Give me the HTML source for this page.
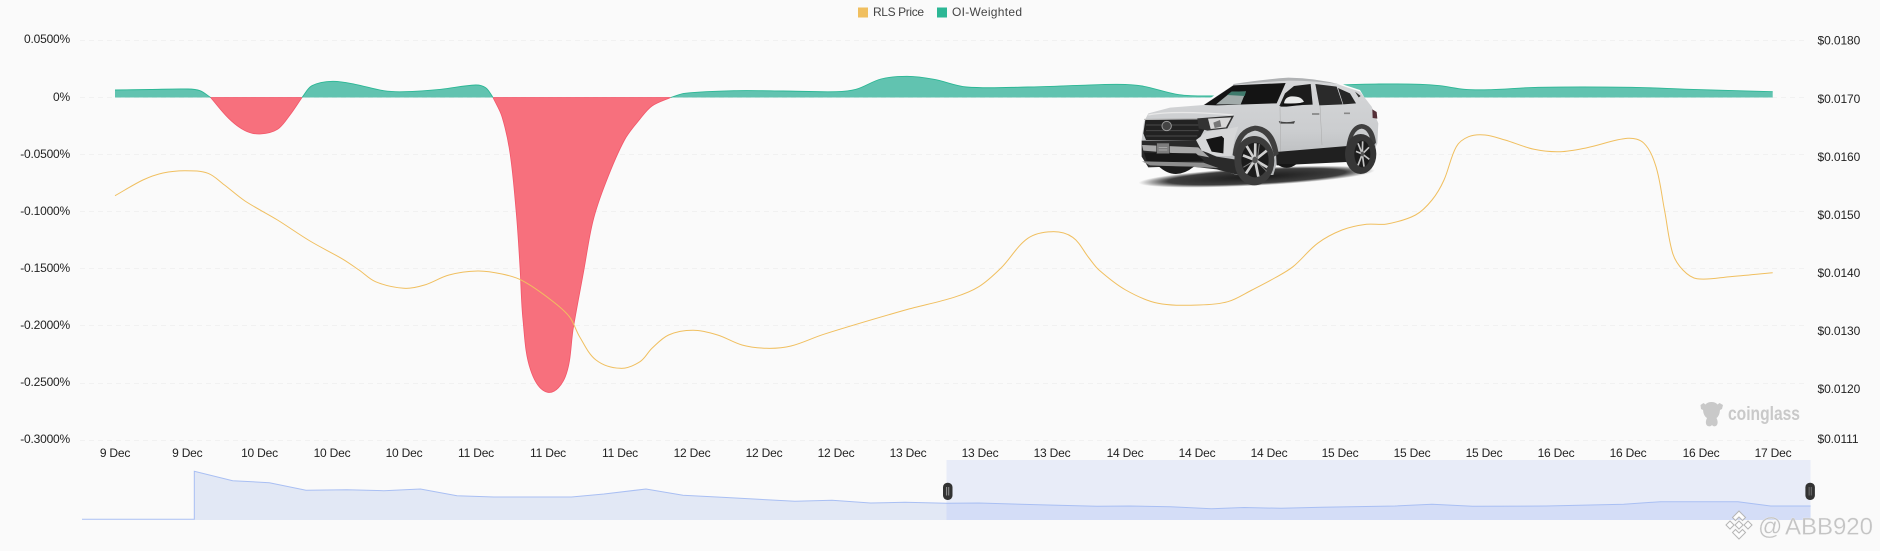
<!DOCTYPE html>
<html>
<head>
<meta charset="utf-8">
<style>
html,body{margin:0;padding:0;background:#fafafa;width:1880px;height:551px;overflow:hidden}
svg{display:block;font-family:"Liberation Sans",sans-serif}
.l{font-size:12px;fill:#222;text-anchor:end;letter-spacing:-.2px}
.r{font-size:12px;fill:#222;letter-spacing:-.1px}
.x{font-size:12px;fill:#222;text-anchor:middle;letter-spacing:-.2px}
.g{stroke:#f1f1f1;stroke-width:1;stroke-dasharray:5 4}
</style>
</head>
<body>
<svg width="1880" height="551" viewBox="0 0 1880 551" xmlns="http://www.w3.org/2000/svg">
<rect width="1880" height="551" fill="#fafafa"/>
<!-- legend -->
<rect x="858" y="7.5" width="10" height="10" fill="#f0bf5f"/>
<text x="873" y="16" font-size="12" fill="#444" textLength="51">RLS Price</text>
<rect x="937" y="7.5" width="10" height="10" fill="#2cb795"/>
<text x="952" y="16" font-size="12" fill="#444" textLength="70">OI-Weighted</text>
<!-- grid -->
<g class="g">
<line x1="80" x2="1807" y1="40.5" y2="40.5"/>
<line x1="80" x2="1807" y1="97.5" y2="97.5"/>
<line x1="80" x2="1807" y1="154.5" y2="154.5"/>
<line x1="80" x2="1807" y1="211.5" y2="211.5"/>
<line x1="80" x2="1807" y1="268.5" y2="268.5"/>
<line x1="80" x2="1807" y1="325.5" y2="325.5"/>
<line x1="80" x2="1807" y1="383.5" y2="383.5"/>
<line x1="80" x2="1807" y1="440.5" y2="440.5"/>
</g>
<!-- left axis -->
<text class="l" x="70" y="43">0.0500%</text>
<text class="l" x="70" y="101">0%</text>
<text class="l" x="70" y="158">-0.0500%</text>
<text class="l" x="70" y="215">-0.1000%</text>
<text class="l" x="70" y="272">-0.1500%</text>
<text class="l" x="70" y="329">-0.2000%</text>
<text class="l" x="70" y="386">-0.2500%</text>
<text class="l" x="70" y="443">-0.3000%</text>
<!-- right axis -->
<text class="r" x="1817.5" y="44.500">$0.0180</text>
<text class="r" x="1817.5" y="103">$0.0170</text>
<text class="r" x="1817.5" y="161">$0.0160</text>
<text class="r" x="1817.5" y="219">$0.0150</text>
<text class="r" x="1817.5" y="277">$0.0140</text>
<text class="r" x="1817.5" y="335">$0.0130</text>
<text class="r" x="1817.5" y="393">$0.0120</text>
<text class="r" x="1817.5" y="443">$0.0111</text>
<!-- x axis -->
<g>
<text class="x" x="115" y="457">9 Dec</text>
<text class="x" x="187.3" y="457">9 Dec</text>
<text class="x" x="259.5" y="457">10 Dec</text>
<text class="x" x="332" y="457">10 Dec</text>
<text class="x" x="404" y="457">10 Dec</text>
<text class="x" x="476" y="457">11 Dec</text>
<text class="x" x="548" y="457">11 Dec</text>
<text class="x" x="620" y="457">11 Dec</text>
<text class="x" x="692" y="457">12 Dec</text>
<text class="x" x="764" y="457">12 Dec</text>
<text class="x" x="836" y="457">12 Dec</text>
<text class="x" x="908" y="457">13 Dec</text>
<text class="x" x="980" y="457">13 Dec</text>
<text class="x" x="1052" y="457">13 Dec</text>
<text class="x" x="1125" y="457">14 Dec</text>
<text class="x" x="1197" y="457">14 Dec</text>
<text class="x" x="1269" y="457">14 Dec</text>
<text class="x" x="1340" y="457">15 Dec</text>
<text class="x" x="1412" y="457">15 Dec</text>
<text class="x" x="1484" y="457">15 Dec</text>
<text class="x" x="1556" y="457">16 Dec</text>
<text class="x" x="1628" y="457">16 Dec</text>
<text class="x" x="1701" y="457">16 Dec</text>
<text class="x" x="1773" y="457">17 Dec</text>
</g>
<!-- OI areas -->
<path id="r1" fill="#f7707d" stroke="#f2566a" stroke-width=".8"/>
<path id="r2" fill="#f7707d" stroke="#f2566a" stroke-width=".8"/>
<path id="g1" fill="#61c3b0"/>
<path id="g2" fill="#61c3b0"/>
<path id="g3" fill="#61c3b0"/>
<path id="g1s" fill="none" stroke="#2cb795" stroke-width=".9"/>
<path id="g2s" fill="none" stroke="#2cb795" stroke-width=".9"/>
<path id="g3s" fill="none" stroke="#2cb795" stroke-width=".9"/>
<!-- price line -->
<path id="price" fill="none" stroke="#f0bf5f" stroke-width="1"/>
<!-- coinglass watermark -->
<g fill="#c9c9c9">
<path d="M1700.5 405 l3 -2 l2 1.5 q2 -2.5 6 -2.5 q4 0 6 2.5 l2 -1.5 l3.5 2 l-1 4 l-2 1 q-.5 6 -3.5 8 q2 4 .5 7 q-1.5 2 -4 1 l-1 -1 l-1 1 q-3 1 -4.5 -1 q-1.500 -3 .5 -7 q-3.500 -2 -4 -8 l-2 -1 z"/>
<text x="1728" y="420" font-size="19" font-weight="bold" textLength="72" lengthAdjust="spacingAndGlyphs">coinglass</text>
</g>
<!-- range slider -->
<rect x="946.5" y="460" width="864" height="60" fill="#e8ecf8"/>
<path id="miniA" fill="#e2e8f5"/>
<clipPath id="sel"><rect x="946.5" y="460" width="864" height="60"/></clipPath>
<path id="miniB" fill="#d4ddf7" clip-path="url(#sel)"/>
<path id="miniL" fill="none" stroke="#a9bff3" stroke-width="1"/>
<rect x="943" y="482.700" width="9.500" height="17.300" rx="4.500" fill="#333"/>
<path d="M946.700 487v8.500M948.800 487v8.500" stroke="#bbb" stroke-width=".7"/>
<rect x="1805.400" y="482.700" width="9.500" height="17.300" rx="4.500" fill="#333"/>
<path d="M1809.100 487v8.500M1811.200 487v8.500" stroke="#888" stroke-width=".7"/>
<!-- car -->
<g transform="translate(1120 60) scale(.33333)">
<defs>
<linearGradient id="bd" x1="0" y1="0" x2="0" y2="1"><stop offset="0" stop-color="#d6d7d9"/><stop offset=".55" stop-color="#cbcdcf"/><stop offset="1" stop-color="#b2b4b6"/></linearGradient>
<radialGradient id="sh"><stop offset="0" stop-color="#000" stop-opacity=".9"/><stop offset=".75" stop-color="#000" stop-opacity=".75"/><stop offset="1" stop-color="#000" stop-opacity="0"/></radialGradient>
</defs>
<!-- white surround hiding chart line behind car -->
<path d="M240 135L340 68L505 50L665 72L720 90L780 190L780 260L770 320L420 385L60 370L60 160Z" fill="#fbfbfb"/>
<ellipse cx="410" cy="350" rx="355" ry="27" fill="url(#sh)" transform="rotate(-3 410 350)"/>
<!-- body -->
<path d="M65 240L72 185L85 160L150 143L250 135L340 75L430 63L505 55L580 58L660 75L720 95L755 140L775 190L772 250L755 285L680 305L470 310L460 345L350 345L290 325L200 315L85 318L65 290Z" fill="url(#bd)"/>
<path d="M340 72Q430 58 505 53Q590 55 662 74Q590 62 505 62Q420 66 340 75Z" fill="#b0b2b4"/>
<!-- windshield -->
<path d="M252 135L340 76L497 69L470 130L290 136Z" fill="#141414"/>
<path d="M288 133L335 95L378 94L362 133Z" fill="#a2abaa"/>
<path d="M322 105L335 95L378 94L374 108Z" fill="#3f7a6c"/>
<!-- side windows -->
<path d="M478 138L495 100L522 78L572 72L578 134Z" fill="#1c1c1c"/>
<path d="M586 72L650 80L668 133L598 136Z" fill="#2a2a2a"/>
<path d="M654 84L690 100L708 130L670 133Z" fill="#262626"/>
<path d="M705 95L722 108L716 112Z" fill="#333"/>
<!-- mirror -->
<path d="M492 130Q495 110 515 109Q545 108 552 126Q535 132 492 130Z" fill="#e9eaea"/>
<path d="M480 140L492 130Q530 134 552 126L545 135L500 140Z" fill="#111"/>
<!-- creases / handles -->
<path d="M476 183Q500 190 525 183L522 191L480 191Z" fill="#444"/>
<path d="M576 162h22M672 160h18" stroke="#888" stroke-width="5"/>
<path d="M600 136L606 255M480 140L482 280" stroke="#aaa" stroke-width="1.500" fill="none"/>
<path d="M85 165Q160 150 340 165" stroke="#e8e8e8" stroke-width="4" fill="none"/>
<path d="M757 148l13 8l2 20l-14 -2z" fill="#553038"/>
<!-- grille -->
<path d="M76 180L235 178L268 182L236 240L78 240L70 220Z" fill="#222"/>
<path d="M78 195H240M78 212H236M78 228H232" stroke="#4a4a4a" stroke-width="3"/>
<circle cx="140" cy="198" r="14" fill="#444" stroke="#999" stroke-width="3"/>
<path d="M72 178L235 176" stroke="#b5b5b5" stroke-width="3"/>
<!-- headlight -->
<path d="M232 175L342 167L322 205L262 212L236 205Z" fill="#333"/>
<path d="M264 176L334 172L318 202L272 207Z" fill="#d8d8d8"/>
<path d="M280 188L300 180L304 200L284 204Z" fill="#777"/>
<!-- bumper lower -->
<path d="M65 242L232 240Q240 272 290 290L355 300L355 345L290 328L200 318L85 322L65 290Z" fill="#2a2a2a"/>
<path d="M66 255L235 262L268 292L230 285L70 272Z" fill="#a8a8a8"/>
<path d="M72 278L228 280L252 302L110 308L80 302Z" fill="#181818"/>
<path d="M66 304L250 308L295 324L90 316Z" fill="#8e8e8e"/>
<rect x="110" y="249" width="38" height="32" fill="#7d7d7d" stroke="#333" stroke-width="2"/>
<path d="M116 262h26M116 270h26" stroke="#bbb" stroke-width="2"/>
<path d="M115 318Q165 365 222 320Z" fill="#1c1c1c"/>
<!-- fog vent -->
<path d="M228 240L262 215L330 205L355 200L345 230L335 288L290 288L245 272Z" fill="#d6d7d8"/>
<path d="M258 238L305 228L312 235L310 280L275 275Z" fill="#151515"/>
<!-- sill -->
<path d="M468 276L682 258L680 306L470 316Z" fill="#202020"/>
<path d="M470 312Q500 335 530 312Z" fill="#161616"/>
<!-- wheel arches -->
<path d="M338 285Q345 205 405 197Q465 200 476 282L462 290Q450 218 405 212Q358 220 352 295Z" fill="#3f3f3f"/>
<path d="M678 270Q685 195 725 192Q762 195 768 248L755 265Q750 208 725 206Q695 210 690 275Z" fill="#3f3f3f"/>
<!-- front wheel -->
<ellipse cx="403" cy="302" rx="60" ry="74" fill="#3c3c3c"/>
<ellipse cx="405" cy="300" rx="41" ry="52" fill="#1c1c1c"/>
<g stroke="#cfcfcf" stroke-width="8">
<path d="M405 300L406 250M405 300L440 272M405 300L442 322M405 300L415 350M405 300L378 340M405 300L369 286M405 300L380 258"/>
</g>
<g stroke="#7c7c7c" stroke-width="3"><path d="M412 298L418 252M410 304L440 334M398 305L370 322"/></g>
<ellipse cx="405" cy="300" rx="8" ry="10" fill="#555"/>
<!-- rear wheel -->
<ellipse cx="722" cy="282" rx="47" ry="60" fill="#363636"/>
<ellipse cx="727" cy="282" rx="24" ry="40" fill="#1c1c1c"/>
<g stroke="#c4c4c4" stroke-width="5">
<path d="M727 282L728 244M727 282L747 262M727 282L748 298M727 282L732 320M727 282L714 316M727 282L708 274M727 282L714 250"/>
</g>
<ellipse cx="727" cy="282" rx="5" ry="7" fill="#555"/>
</g>
<!-- ABB920 watermark -->
<g fill="#fdfdfd" stroke="#b5b5b5" stroke-width="1">
<path d="M1739 511l6.500 6.500l-3 3l-3.500 -3.500l-3.500 3.500l-3 -3z"/>
<path d="M1739 539l6.500 -6.500l-3 -3l-3.500 3.500l-3.500 -3.500l-3 3z"/>
<path d="M1739 521l4 4l-4 4l-4 -4z"/>
<path d="M1730 521l4 4l-4 4l-4 -4z"/>
<path d="M1748 521l4 4l-4 4l-4 -4z"/>
</g>
<text x="1758" y="534.500" font-size="24" fill="#c2c2c2" stroke="#f4f4f4" stroke-width=".3">@</text>
<text x="1785" y="534.500" font-size="24" fill="#c4c4c4" stroke="#f4f4f4" stroke-width=".3" textLength="88">ABB920</text>
</svg>
<script>
function cr(p){var d='',n=p.length;function D(a,b){return Math.max(.01,Math.hypot(a[0]-b[0],a[1]-b[1]));}
function T(i){var a=p[Math.max(i-1,0)],b=p[Math.min(i+1,n-1)],l=D(a,b);return [(b[0]-a[0])/l,(b[1]-a[1])/l];}
for(var i=0;i<n-1;i++){var b=p[i],c=p[i+1],L=D(b,c)/3,t0=T(i),t1=T(i+1);
d+='C'+(b[0]+t0[0]*L).toFixed(1)+' '+(b[1]+t0[1]*L).toFixed(1)+' '+(c[0]-t1[0]*L).toFixed(1)+' '+(c[1]-t1[1]*L).toFixed(1)+' '+c[0]+' '+c[1];}return d;}
function s(id,d){document.getElementById(id).setAttribute('d',d);}
var Z=97.5;
var G1=[[115,90],[150,89.5],[187.8,89],[200,90.7],[210.6,97.5]];
var R1=[[210.6,97.5],[228.6,118.3],[245,130.7],[260,134],[277.5,129.3],[290,115],[302,97.5]];
var G2=[[302,97.5],[312,85.7],[332.7,81.3],[355,84.3],[383.7,90.7],[404,91.7],[441,89.3],[475.5,85],[485.7,87.7],[493,97.5]];
var R2=[[493,97.5],[502,116.7],[510,153],[516.3,213],[520,267],[523,320],[530.6,370],[547.8,392.3],[565.3,376.7],[573.5,326.7],[583.7,271],[593,221],[606,182],[624.5,140],[640,119],[652,106],[670.6,97.5]];
var G3=[[670.6,97.5],[685,93.3],[734,90.7],[783,91],[836,91.7],[856,89.3],[881,79],[907,76.3],[934,79.3],[966.5,87],[1028,87],[1081,85.3],[1117.5,84.3],[1142,86],[1179,94.7],[1211,96],[1250,95],[1300,90],[1342,85],[1379,84],[1420,84.3],[1440,85.7],[1464.5,89.3],[1489,89.7],[1538,87.3],[1632,87.3],[1689,89.3],[1772.7,91.7]];
function area(id,p){var d='M'+p[0][0]+' '+p[0][1]+cr(p);s(id+'s',d);s(id,'M'+p[0][0]+' '+Z+'L'+p[0][0]+' '+p[0][1]+cr(p)+'L'+p[p.length-1][0]+' '+Z+'Z');}
area('g1',G1);area('g2',G2);area('g3',G3);
s('r1','M'+R1[0].join(' ')+cr(R1)+'Z');s('r2','M'+R2[0].join(' ')+cr(R2)+'Z');
var P=[[115,195.7],[142.9,180],[163,173],[185.7,170.7],[208,173.3],[224.5,185],[245,201],[277.5,220],[310,241],[343,259.3],[359,270],[375.5,281.7],[404,288.3],[424.5,285],[449,275],[477.6,271],[502,274],[522.4,280.7],[551,300],[569.4,316.7],[579.6,336.7],[596,360],[620.4,368.3],[640,361.7],[652,348.3],[668.6,335],[693,330.3],[717.6,335],[742,345],[766.5,348.3],[791,346],[823.7,334.3],[905.3,310],[954,297.3],[978.8,286.7],[1001,268],[1027.8,238.3],[1052,231.7],[1072.7,237.3],[1089,258],[1099,270],[1125.7,290],[1158,303.3],[1199,305],[1227.8,301.7],[1252,290],[1274.7,278],[1293,266.7],[1317.6,243.3],[1342,230],[1366.5,224.3],[1387,224],[1415.5,215],[1432,200],[1444,180],[1456.3,146.7],[1468.6,136.7],[1485,135],[1505,140],[1534,149.3],[1560.4,151.7],[1587,147.7],[1627.8,138.3],[1644,143.3],[1656,166.7],[1664.5,210],[1672.7,253.3],[1682.9,270],[1697,278.7],[1729.8,276.7],[1772.7,272.7]];
s('price','M'+P[0].join(' ')+cr(P));
var M=[[194.3,471.3],[232.7,480.7],[269.4,482.7],[306,490.3],[347,489.7],[383.7,490.7],[420.4,489],[457,495.7],[494,497],[571.4,497],[604,494],[646,489],[683,495.3],[721.6,497.3],[795,501.3],[832,500.3],[870.6,503],[905,502.3],[946.5,503.3],[978.8,503],[1048,505],[1097,506.3],[1130,506],[1170.6,506.7],[1211.4,508.7],[1244,507.5],[1281,508.3],[1321.6,507.3],[1395,506],[1432,504.3],[1472.7,506.3],[1546,506],[1623.7,504.3],[1660.4,501.7],[1738,501.7],[1770.6,506],[1810.6,506]];
var ml='';for(var i=0;i<M.length;i++){ml+='L'+M[i][0]+' '+M[i][1];}
var ar='M194.3 520'+ml+'L1810.6 520Z';
s('miniA',ar);s('miniB',ar);
s('miniL','M82 519.3L194.3 519.3'+ml);
</script>
</body>
</html>
